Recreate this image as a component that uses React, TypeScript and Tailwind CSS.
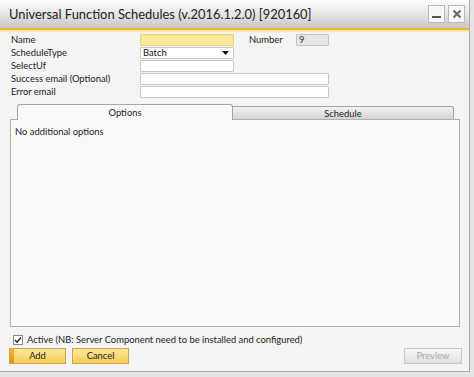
import React from "react";

const font = { fontFamily: 'Lato, "Open Sans", sans-serif' };

function Label({ children }: { children: React.ReactNode }) {
  return <div className="h-[13px] text-[9.4px] leading-[13px] text-[#1a1a1a] whitespace-nowrap">{children}</div>;
}

export default function App() {
  return (
    <div className="w-[474px] h-[377px] bg-[#e4e4e4] overflow-hidden" style={font}>
      <div className="w-[470px] h-[372px] bg-[#f4f4f4] border-r border-b border-[#a8a8a8] flex flex-col">
        {/* Title bar */}
        <div className="h-[28px] bg-gradient-to-b from-[#fdfdfd] via-[#e6e6e6] to-[#c6c6c6] flex items-center pl-[9px] pr-[4px]">
          <div className="text-[12.9px] text-[#222] flex-1 whitespace-nowrap pt-[2px]">Universal Function Schedules (v.2016.1.2.0) [920160]</div>
          <div className="flex gap-[3px] mr-[0px]">
            <div className="w-[17px] h-[18px] bg-[#f8f8f8] border border-[#b8b8b8] flex items-end justify-center pb-[4px]">
              <div className="w-[9px] h-[2px] bg-[#555]" />
            </div>
            <div className="w-[17px] h-[18px] bg-[#f8f8f8] border border-[#b8b8b8] flex items-center justify-center">
              <svg width="10" height="10" viewBox="0 0 10 10"><path d="M1.5 1.5 L8.5 8.5 M8.5 1.5 L1.5 8.5" stroke="#666" strokeWidth="2" /></svg>
            </div>
          </div>
        </div>
        <div className="h-[2px] bg-[#eab52a]" />
        <div className="h-[3px] bg-gradient-to-b from-[#f7dc8c] to-[#f4f4f4]" />

        {/* Form */}
        <div className="flex pl-[11px] pt-[0px]">
          <div className="w-[129px] flex flex-col">
            <Label>Name</Label>
            <Label>ScheduleType</Label>
            <Label>SelectUf</Label>
            <Label>Success email (Optional)</Label>
            <Label>Error email</Label>
          </div>
          <div className="flex flex-col">
            <div className="flex">
              <div className="w-[94px] h-[13px] py-[0.5px]">
                <div className="h-[12px] bg-[#fce89a] border border-[#e8d27a] rounded-[1px]" />
              </div>
              <div className="ml-[15px] w-[47px] text-[9.4px] leading-[13px] text-[#1a1a1a]">Number</div>
              <div className="w-[33px] h-[13px] py-[0.5px]">
                <div className="h-[12px] bg-[#e6e6e6] border border-[#c4c4c4] rounded-[1px] text-[9.4px] leading-[10px] pl-[2px] text-[#333]">9</div>
              </div>
            </div>
            <div className="w-[94px] h-[13px] py-[0.5px]">
              <div className="h-[12px] bg-white border border-[#c8c8c8] rounded-[1px] flex items-center justify-between pl-[2px] pr-[4px] text-[9.4px] leading-[10px] text-[#111]">
                <span>Batch</span>
                <svg width="7" height="4" viewBox="0 0 7 4"><path d="M0 0 H7 L3.5 4 Z" fill="#111" /></svg>
              </div>
            </div>
            <div className="w-[94px] h-[13px] py-[0.5px]">
              <div className="h-[12px] bg-white border border-[#c8c8c8] rounded-[1px]" />
            </div>
            <div className="w-[189px] h-[13px] py-[0.5px]">
              <div className="h-[12px] bg-white border border-[#c8c8c8] rounded-[1px]" />
            </div>
            <div className="w-[189px] h-[13px] py-[0.5px]">
              <div className="h-[12px] bg-white border border-[#c8c8c8] rounded-[1px]" />
            </div>
          </div>
        </div>

        {/* Tabs */}
        <div className="mt-[6px] ml-[10px] w-[450px] flex flex-col">
          <div className="flex items-end h-[16px] pl-[7px]">
            <div className="w-[216px] h-[16px] bg-[#f9f9f9] border border-b-0 border-[#a4a4a4] rounded-t-[3px] text-[9.4px] leading-[16px] text-center text-[#222] relative z-10">Options</div>
            <div className="w-[221px] h-[14px] bg-gradient-to-b from-[#f2f2f2] to-[#d2d2d2] border border-b-0 border-l-0 border-[#a4a4a4] rounded-tr-[3px] text-[9.4px] leading-[13px] text-center text-[#222]">Schedule</div>
          </div>
          <div className="h-[208px] bg-[#f9f9f9] border border-[#b0b0b0] -mt-[1px] px-[4px] pt-[5px]">
            <div className="text-[9.4px] leading-[13px] text-[#222]">No additional options</div>
          </div>
        </div>

        {/* Active */}
        <div className="mt-[7px] ml-[13px] flex items-center gap-[4px]">
          <div className="w-[10px] h-[10px] bg-white border border-[#8a8a8a] flex items-center justify-center">
            <svg width="8" height="8" viewBox="0 0 8 8"><path d="M1 4 L3 6.2 L7 1.5" stroke="#222" strokeWidth="1.4" fill="none" /></svg>
          </div>
          <div className="text-[9.4px] leading-[12px] text-[#222] whitespace-nowrap">Active (NB: Server Component need to be installed and configured)</div>
        </div>

        {/* Buttons */}
        <div className="mt-[2px] ml-[9px] mr-[7px] flex items-center">
          <div className="w-[57px] h-[16px] flex border border-[#c9a64a] bg-gradient-to-b from-[#fde99a] to-[#f6cc55]">
            <div className="w-[4px] h-full bg-gradient-to-b from-[#f7b23a] to-[#e98a10]" />
            <div className="flex-1 text-center text-[9.4px] leading-[14px] text-[#222] pr-[4px]">Add</div>
          </div>
          <div className="ml-[6px] w-[57px] h-[16px] border border-[#c9a64a] bg-gradient-to-b from-[#fde99a] to-[#f6cc55] text-center text-[9.4px] leading-[14px] text-[#222]">Cancel</div>
          <div className="flex-1" />
          <div className="w-[58px] h-[16px] border border-[#c8c8c8] bg-gradient-to-b from-[#f6f6f6] to-[#e2e2e2] text-center text-[9.4px] leading-[14px] text-[#a8a8a8]">Preview</div>
        </div>
      </div>
    </div>
  );
}
